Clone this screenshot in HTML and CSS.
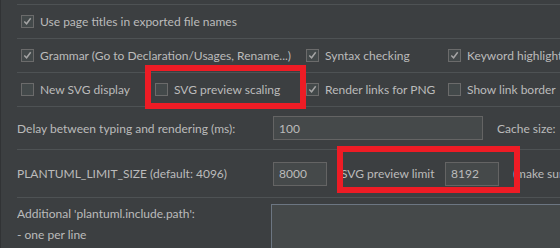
FILE: index.html
```html
<!DOCTYPE html>
<html lang="en">
<head>
    <meta charset="UTF-8">
    <title>PlantUML Settings</title>
    <link rel="stylesheet" href="styles.css">
</head>
<body>
    <div class="panel">
        <div class="row row-short">
            <label class="check"><span class="box"><svg viewBox="0 0 12 12"><polyline points="2.5,6 5,8.5 9.5,2.5"/></svg></span>Use page titles in exported file names</label>
        </div>
        <div class="row grid">
            <label class="check wide"><span class="box"><svg viewBox="0 0 12 12"><polyline points="2.5,6 5,8.5 9.5,2.5"/></svg></span>Grammar (Go to Declaration/Usages, Rename...)</label>
            <label class="check"><span class="box"><svg viewBox="0 0 12 12"><polyline points="2.5,6 5,8.5 9.5,2.5"/></svg></span>Syntax checking</label>
            <label class="check"><span class="box"><svg viewBox="0 0 12 12"><polyline points="2.5,6 5,8.5 9.5,2.5"/></svg></span>Keyword highlighting</label>
        </div>
        <div class="row grid">
            <label class="check"><span class="box"></span>New SVG display</label>
            <label class="check"><span class="box"></span>SVG preview scaling</label>
            <label class="check"><span class="box"><svg viewBox="0 0 12 12"><polyline points="2.5,6 5,8.5 9.5,2.5"/></svg></span>Render links for PNG</label>
            <label class="check"><span class="box"></span>Show link border</label>
        </div>
        <div class="row row-delay">
            <span class="label lead">Delay between typing and rendering (ms):</span>
            <span class="field field-long">100</span>
            <span class="label cache">Cache size:</span>
        </div>
        <div class="row row-limit">
            <span class="label lead">PLANTUML_LIMIT_SIZE (default: 4096)</span>
            <span class="field">8000</span>
            <span class="label svg-limit">SVG preview limit</span>
            <span class="field">8192</span>
            <span class="label make">(make sure</span>
        </div>
        <div class="row row-include">
            <div class="include-text">
                <div>Additional 'plantuml.include.path':</div>
                <div>- one per line</div>
            </div>
            <div class="textarea"></div>
        </div>
    </div>
    <div class="mark mark-scaling"></div>
    <div class="mark mark-limit"></div>
</body>
</html>
```

FILE: styles.css
```css
body {
    margin: 0;
    width: 560px;
    height: 248px;
    overflow: hidden;
    position: relative;
    background-color: #3c3f41;
    color: #bbbbbb;
    font-family: Lato, sans-serif;
    font-size: 12px;
    border-left: 1px solid #313335;
    box-sizing: border-box;
}
.panel {
    margin-left: 16px;
    padding-top: 4px;
    height: 244px;
    overflow: hidden;
    white-space: nowrap;
}
.row {
    border-top: 1px solid #4e5254;
    display: flex;
    align-items: center;
    height: 33px;
    overflow: hidden;
}
.row.grid {
    display: grid;
    grid-template-columns: 134px 151px 142px 200px;
    padding-left: 4px;
}
.row-short {
    padding-left: 4px;
}
.check {
    display: flex;
    align-items: center;
}
.check.wide {
    grid-column: span 2;
}
.box {
    width: 11px;
    height: 11px;
    border: 1px solid #6b6b6b;
    background-color: #43494a;
    margin-right: 6px;
    flex: none;
    display: flex;
}
.box svg {
    width: 11px;
    height: 11px;
}
.box polyline {
    fill: none;
    stroke: #a5a5a5;
    stroke-width: 1.6;
}
.row-delay {
    height: 42px;
}
.row-limit {
    height: 47px;
}
.label {
    flex: none;
}
.lead {
    width: 256px;
}
.field {
    box-sizing: border-box;
    height: 24px;
    width: 54px;
    border: 1px solid #646464;
    background-color: #45494a;
    padding: 0 5px;
    display: flex;
    align-items: center;
    flex: none;
}
.field-long {
    width: 210px;
}
.cache {
    margin-left: 14px;
}
.svg-limit {
    margin-left: 14px;
    width: 104px;
}
.make {
    margin-left: 14px;
}
.row-include {
    height: 60px;
    align-items: flex-start;
}
.include-text {
    width: 254px;
    padding-top: 5px;
    line-height: 21px;
}
.textarea {
    margin-top: 6px;
    height: 60px;
    flex: 1;
    border: 1px solid #6c7682;
    border-right: none;
    background-color: #45494a;
}
.mark {
    position: absolute;
    border: 6px solid #ee1c25;
    box-sizing: border-box;
}
.mark-scaling {
    left: 144px;
    top: 65px;
    width: 161px;
    height: 44px;
}
.mark-limit {
    left: 336px;
    top: 146px;
    width: 183px;
    height: 47px;
}
```
